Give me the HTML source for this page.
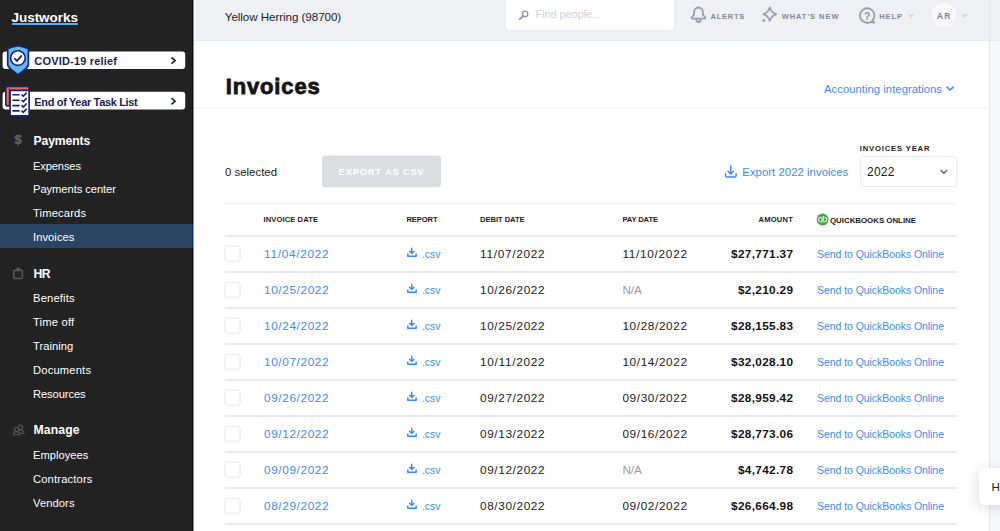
<!DOCTYPE html>
<html><head><meta charset="utf-8">
<style>
*{box-sizing:border-box;margin:0;padding:0}
html,body{width:1000px;height:531px;overflow:hidden;background:#fff;font-family:"Liberation Sans",sans-serif;color:#1c1c1e}
.a{position:absolute}
.t{position:absolute;white-space:nowrap;line-height:1}
.hl{position:absolute;height:2px;background:#e9eaee;left:225px;width:732px}

svg{position:absolute;overflow:visible}
</style></head><body>
<!-- sidebar -->
<div class="a" style="left:0;top:0;width:192px;height:531px;background:#222222"></div>
<div class="a" style="left:192px;top:0;width:1px;height:531px;background:#0d0d0d"></div>
<div class="a" style="left:193px;top:0;width:1px;height:531px;background:#8d8d8f"></div>
<div class="a" style="left:0;top:224px;width:192px;height:24px;background:#2a4464"></div>
<div class="a" style="left:192px;top:224px;width:1px;height:24px;background:#17325a"></div>
<div class="a" style="left:193px;top:224px;width:1px;height:24px;background:#8d9cb2"></div>
<!-- logo underline -->
<div class="a" style="left:11.5px;top:23px;width:66.5px;height:2px;background:#59aef5"></div>

<!-- top bar -->
<div class="a" style="left:195px;top:0;width:805px;height:41px;background:#eef0f4;border-bottom:1px solid #e8eaee"></div>
<!-- right strip -->
<div class="a" style="left:989px;top:41px;width:11px;height:490px;background:#f7f8fb"></div>
<div class="a" style="left:989px;top:0;width:1px;height:531px;background:#e5e6eb"></div>
<!-- search -->
<div class="a" style="left:506.400px;top:-2px;width:167.600px;height:32.400px;background:#fff;border-radius:0 0 4px 4px;box-shadow:0 0 1.500px #d4d6de"></div>

<svg style="left:0;top:0" width="1000" height="531" viewBox="0 0 1000 531">
<!-- banners -->
<rect x="2.600" y="51.400" width="182.600" height="17.700" rx="3" fill="#fff"/>
<rect x="2.600" y="91.800" width="182.600" height="17.600" rx="3" fill="#fff"/>
<path d="M171.500 57.500 L175.100 60.600 L171.500 63.700" fill="none" stroke="#1c2552" stroke-width="1.650"/>
<path d="M171.500 98.100 L175.100 101.200 L171.500 104.300" fill="none" stroke="#1c2552" stroke-width="1.650"/>
<!-- shield -->
<path d="M7.700 49.300 Q7.700 48.500 8.600 48.200 Q14 46.300 18 45.600 Q22 46.300 27.500 48.200 Q28.400 48.500 28.400 49.300 L28.400 64.500 C28.400 67.500 24 70.500 18 74.700 C12 70.500 7.700 67.500 7.700 64.500 Z" fill="#62b8f0" stroke="#1b2070" stroke-width="1.700" stroke-linejoin="round"/>
<circle cx="17.900" cy="58.100" r="7.300" fill="#fff" stroke="#1b2070" stroke-width="1.600"/>
<path d="M14.300 58.300 L17 60.900 L21.800 55.300" fill="none" stroke="#1b2070" stroke-width="1.800"/>
<!-- clipboard banner icon -->
<rect x="5.800" y="86.400" width="23.300" height="19.500" rx="1.800" fill="#e5703a" stroke="#1b2070" stroke-width="1.600"/>
<rect x="10.100" y="90.400" width="19" height="25.500" rx="0.800" fill="#fff" stroke="#1b2070" stroke-width="1.600"/>
<path d="M9.400 88.500 L9.400 105" fill="none" stroke="#1b2070" stroke-width="1.200"/>
<g fill="none" stroke="#1b2070" stroke-width="1.600">
<path d="M12.400 94.700h7.200M12.400 100.200h7.200M12.400 105.600h7.200M12.400 110.900h7.200"/>
<path d="M21.500 94.500l1.800 1.700 3.300-3.600M21.500 100l1.800 1.700 3.300-3.600M21.500 105.400l1.800 1.700 3.300-3.600M21.500 110.700l1.800 1.700 3.300-3.600"/>
</g>
<!-- HR icon -->
<g fill="none" stroke="#5b5c61" stroke-width="1.500">
<rect x="13.800" y="270.200" width="8.600" height="8.200" rx="1.300"/>
<circle cx="18.100" cy="269.600" r="1.300" fill="#222"/>
</g>
<!-- Manage icon -->
<g fill="#222" stroke="#56575c" stroke-width="1.100">
<circle cx="20.600" cy="427.200" r="2.100"/>
<path d="M16.800 433.200 C16.800 430.800 18.200 430 20.600 430 C23 430 24 430.800 24 433.200 Z"/>
<circle cx="16.600" cy="429.400" r="2.100"/>
<path d="M13.200 434.800 C13.200 432.600 14.300 432 16.600 432 C18.900 432 20 432.600 20 434.800 Z"/>
</g>
<!-- magnifier -->
<g fill="none" stroke="#9295a0">
<circle cx="525.100" cy="13.900" r="2.700" stroke-width="1.300"/>
<path d="M523 16.100 L519.700 19.400" stroke-width="1.700" stroke-linecap="round"/>
</g>
<!-- bell -->
<g fill="none" stroke="#9b9da7" stroke-width="1.800" stroke-linejoin="round">
<path d="M694.100 14.500 V11.900 a4.400 4.400 0 0 1 8.800 0 V14.500 c0 1.300 2.600 2 2.600 3.300 c0 .5 -.4 .8 -1 .8 H692.500 c-.6 0 -1 -.3 -1 -.8 c0 -1.300 2.600 -2 2.600 -3.300 Z"/>
<path d="M696.300 19 a2.200 3 0 0 0 4.400 0"/>
</g>
<!-- sparkle -->
<path d="M769.800 7.600 Q771.300 12.800 776.300 14.240 Q771.300 15.700 769.800 20.900 Q768.300 15.700 763.300 14.240 Q768.300 12.800 769.800 7.600 Z" fill="none" stroke="#9b9da7" stroke-width="1.700" stroke-linejoin="round"/>
<path d="M763.800 18.300 Q764.200 20.100 766 20.500 Q764.200 20.900 763.800 22.700 Q763.400 20.900 761.600 20.500 Q763.400 20.100 763.800 18.300 Z" fill="#9b9da7"/>
<!-- help -->
<g fill="none" stroke="#9b9da7" stroke-width="1.750" stroke-linejoin="round">
<path d="M872.200 20.700 A7.200 7.200 0 1 0 869.600 22.300 C871 22 872.500 22.300 874.300 22.600 C873.500 21.800 872.800 21.500 872.200 20.700 Z"/>
</g>
<!-- carets -->
<path d="M908 14.500 h6.400 l-3.200 3.400 Z" fill="#d5d6dc"/>
<path d="M961.600 14.500 h6.400 l-3.200 3.400 Z" fill="#d5d6dc"/>
<!-- avatar -->
<circle cx="944" cy="14.900" r="13.600" fill="#f8f8fb" stroke="#e8e9ee" stroke-width="1"/>
<!-- header rule -->
<rect x="194" y="107.500" width="795" height="1" fill="#eff0f2"/>
<!-- accounting chevron -->
<path d="M946.700 86.700 L950.100 90 L953.500 86.700" fill="none" stroke="#3384ee" stroke-width="1.500"/>
<!-- export button -->
<rect x="321.800" y="155.500" width="119.200" height="31.800" rx="3.500" fill="#dcdde1"/>
<!-- export icon -->
<g fill="none" stroke="#3b8af0" stroke-width="1.500" stroke-linecap="round" stroke-linejoin="round">
<path d="M730.700 166 V173.800 M727.900 171.300 L730.700 174 L733.500 171.300"/>
<path d="M725.600 173.800 V175.800 Q725.600 177.050 726.900 177.050 H734.800 Q736.100 177.050 736.100 175.800 V173.800"/>
</g>
<!-- select -->
<rect x="860.300" y="156.600" width="96.500" height="30" rx="3" fill="#fff" stroke="#e6e7ec" stroke-width="1"/>
<path d="M940.500 169.900 L943.850 173.300 L947.200 169.900" fill="none" stroke="#5f6066" stroke-width="1.300"/>
<!-- QB icon -->
<circle cx="822.600" cy="219.500" r="5.900" fill="#49a246"/>
<g fill="none" stroke="#dff1dc" stroke-width="1.100">
<path d="M821.900 217.300 H820.700 a2.200 2.200 0 0 0 0 4.400 H821"/>
<path d="M823.300 221.700 H824.500 a2.200 2.200 0 0 0 0 -4.400 H824.200"/>
<path d="M821.900 217.800 V223 M823.300 216 V221.200"/>
</g>
<g fill="none" stroke="#3b8af0" stroke-width="1.400" stroke-linejoin="round"><path d="M411.750 248.20 V253.40 M409.600 251.20 L411.750 253.50 L413.900 251.20" stroke-linecap="round"/><path d="M407.800 253.60 V256.20 H416.200 V253.60"/></g>
<g fill="none" stroke="#3b8af0" stroke-width="1.400" stroke-linejoin="round"><path d="M411.750 284.20 V289.40 M409.600 287.20 L411.750 289.50 L413.900 287.20" stroke-linecap="round"/><path d="M407.800 289.60 V292.20 H416.200 V289.60"/></g>
<g fill="none" stroke="#3b8af0" stroke-width="1.400" stroke-linejoin="round"><path d="M411.750 320.20 V325.40 M409.600 323.20 L411.750 325.50 L413.900 323.20" stroke-linecap="round"/><path d="M407.800 325.60 V328.20 H416.200 V325.60"/></g>
<g fill="none" stroke="#3b8af0" stroke-width="1.400" stroke-linejoin="round"><path d="M411.750 356.20 V361.40 M409.600 359.20 L411.750 361.50 L413.900 359.20" stroke-linecap="round"/><path d="M407.800 361.60 V364.20 H416.200 V361.60"/></g>
<g fill="none" stroke="#3b8af0" stroke-width="1.400" stroke-linejoin="round"><path d="M411.750 392.20 V397.40 M409.600 395.20 L411.750 397.50 L413.900 395.20" stroke-linecap="round"/><path d="M407.800 397.60 V400.20 H416.200 V397.60"/></g>
<g fill="none" stroke="#3b8af0" stroke-width="1.400" stroke-linejoin="round"><path d="M411.750 428.20 V433.40 M409.600 431.20 L411.750 433.50 L413.900 431.20" stroke-linecap="round"/><path d="M407.800 433.60 V436.20 H416.200 V433.60"/></g>
<g fill="none" stroke="#3b8af0" stroke-width="1.400" stroke-linejoin="round"><path d="M411.750 464.20 V469.40 M409.600 467.20 L411.750 469.50 L413.900 467.20" stroke-linecap="round"/><path d="M407.800 469.60 V472.20 H416.200 V469.60"/></g>
<g fill="none" stroke="#3b8af0" stroke-width="1.400" stroke-linejoin="round"><path d="M411.750 500.20 V505.40 M409.600 503.20 L411.750 505.50 L413.900 503.20" stroke-linecap="round"/><path d="M407.800 505.60 V508.20 H416.200 V505.60"/></g>
<rect x="224.850" y="246.30" width="15.300" height="15.100" rx="3.200" fill="#fff" stroke="#eef0f3" stroke-width="1.600"/><rect x="224.850" y="282.30" width="15.300" height="15.100" rx="3.200" fill="#fff" stroke="#eef0f3" stroke-width="1.600"/><rect x="224.850" y="318.30" width="15.300" height="15.100" rx="3.200" fill="#fff" stroke="#eef0f3" stroke-width="1.600"/><rect x="224.850" y="354.30" width="15.300" height="15.100" rx="3.200" fill="#fff" stroke="#eef0f3" stroke-width="1.600"/><rect x="224.850" y="390.30" width="15.300" height="15.100" rx="3.200" fill="#fff" stroke="#eef0f3" stroke-width="1.600"/><rect x="224.850" y="426.30" width="15.300" height="15.100" rx="3.200" fill="#fff" stroke="#eef0f3" stroke-width="1.600"/><rect x="224.850" y="462.30" width="15.300" height="15.100" rx="3.200" fill="#fff" stroke="#eef0f3" stroke-width="1.600"/><rect x="224.850" y="498.30" width="15.300" height="15.100" rx="3.200" fill="#fff" stroke="#eef0f3" stroke-width="1.600"/>
</svg>

<!-- help "?" -->
<div class="t" style="left:863.900px;top:10.600px;font-size:10.500px;font-weight:bold;color:#92949e">?</div>

<!-- table lines -->
<div class="a" style="left:225px;top:203px;width:732px;height:1px;background:#eceef2"></div>
<div class="hl" style="top:235px"></div>
<div class="hl" style="top:271px"></div>
<div class="hl" style="top:307px"></div>
<div class="hl" style="top:343px"></div>
<div class="hl" style="top:379px"></div>
<div class="hl" style="top:415px"></div>
<div class="hl" style="top:451px"></div>
<div class="hl" style="top:487px"></div>
<div class="hl" style="top:523px"></div>

<!-- floating help -->
<div class="a" style="left:978.600px;top:468.300px;width:40px;height:37px;background:#fff;border-radius:6px;box-shadow:-2px 3px 14px rgba(0,0,0,.13)"></div>

<div class="t" id="t0" style="left:11.50px;top:10.57px;font-size:13.5px;font-weight:bold;color:#fff;letter-spacing:-0.035px;">Justworks</div>
<div class="t" id="t1" style="left:34.30px;top:56.39px;font-size:11px;font-weight:bold;color:#1c2552;letter-spacing:0.186px;">COVID-19 relief</div>
<div class="t" id="t2" style="left:34.30px;top:97.19px;font-size:11px;font-weight:bold;color:#1c2552;letter-spacing:-0.342px;">End of Year Task List</div>
<div class="t" id="t3" style="left:14.60px;top:133.00px;font-size:13px;font-weight:bold;color:#606169;letter-spacing:0.000px;-webkit-text-stroke:0.35px #606169;">$</div>
<div class="t" id="t4" style="left:33.50px;top:134.77px;font-size:12.2px;font-weight:bold;color:#fff;letter-spacing:-0.113px;">Payments</div>
<div class="t" id="t5" style="left:33.50px;top:267.77px;font-size:12.2px;font-weight:bold;color:#fff;letter-spacing:-0.609px;">HR</div>
<div class="t" id="t6" style="left:33.50px;top:424.07px;font-size:12.2px;font-weight:bold;color:#fff;letter-spacing:0.122px;">Manage</div>
<div class="t" id="t7" style="left:33.00px;top:161.12px;font-size:11.2px;font-weight:normal;color:#fff;letter-spacing:-0.163px;">Expenses</div>
<div class="t" id="t8" style="left:33.00px;top:183.92px;font-size:11.2px;font-weight:normal;color:#fff;letter-spacing:-0.068px;">Payments center</div>
<div class="t" id="t9" style="left:33.00px;top:207.72px;font-size:11.2px;font-weight:normal;color:#fff;letter-spacing:0.148px;">Timecards</div>
<div class="t" id="t10" style="left:33.00px;top:231.52px;font-size:11.2px;font-weight:normal;color:#fff;letter-spacing:0.050px;">Invoices</div>
<div class="t" id="t11" style="left:33.00px;top:292.92px;font-size:11.2px;font-weight:normal;color:#fff;letter-spacing:0.166px;">Benefits</div>
<div class="t" id="t12" style="left:33.00px;top:316.72px;font-size:11.2px;font-weight:normal;color:#fff;letter-spacing:0.186px;">Time off</div>
<div class="t" id="t13" style="left:33.00px;top:340.52px;font-size:11.2px;font-weight:normal;color:#fff;letter-spacing:0.026px;">Training</div>
<div class="t" id="t14" style="left:33.00px;top:365.32px;font-size:11.2px;font-weight:normal;color:#fff;letter-spacing:0.176px;">Documents</div>
<div class="t" id="t15" style="left:33.00px;top:389.12px;font-size:11.2px;font-weight:normal;color:#fff;letter-spacing:-0.111px;">Resources</div>
<div class="t" id="t16" style="left:33.00px;top:449.52px;font-size:11.2px;font-weight:normal;color:#fff;letter-spacing:-0.005px;">Employees</div>
<div class="t" id="t17" style="left:33.00px;top:474.32px;font-size:11.2px;font-weight:normal;color:#fff;letter-spacing:0.157px;">Contractors</div>
<div class="t" id="t18" style="left:33.00px;top:498.12px;font-size:11.2px;font-weight:normal;color:#fff;letter-spacing:0.073px;">Vendors</div>
<div class="t" id="t19" style="left:224.80px;top:11.18px;font-size:11.6px;font-weight:normal;color:#1c1c1e;letter-spacing:-0.053px;">Yellow Herring (98700)</div>
<div class="t" id="t20" style="left:535.60px;top:9.09px;font-size:11px;font-weight:normal;color:#cfd1d8;letter-spacing:-0.097px;">Find people...</div>
<div class="t" id="t21" style="left:710.60px;top:13.45px;font-size:7.5px;font-weight:bold;color:#85878f;letter-spacing:0.740px;">ALERTS</div>
<div class="t" id="t22" style="left:781.70px;top:13.45px;font-size:7.5px;font-weight:bold;color:#85878f;letter-spacing:0.943px;">WHAT'S NEW</div>
<div class="t" id="t23" style="left:879.20px;top:13.45px;font-size:7.5px;font-weight:bold;color:#85878f;letter-spacing:0.928px;">HELP</div>
<div class="t" id="t24" style="left:936.80px;top:12.00px;font-size:8.5px;font-weight:bold;color:#85878f;letter-spacing:1.319px;">AR</div>
<div class="t" id="t25" style="left:225.80px;top:76.08px;font-size:22px;font-weight:bold;color:#141416;letter-spacing:0.836px;-webkit-text-stroke:0.8px #141416;">Invoices</div>
<div class="t" id="t26" style="left:824.00px;top:84.13px;font-size:11.3px;font-weight:normal;color:#3f8cf0;letter-spacing:0.026px;">Accounting integrations</div>
<div class="t" id="t27" style="left:225.00px;top:166.85px;font-size:11.4px;font-weight:normal;color:#1c1c1e;letter-spacing:0.007px;">0 selected</div>
<div class="t" id="t28" style="left:338.60px;top:168.43px;font-size:9.3px;font-weight:bold;color:#ffffff;letter-spacing:0.842px;">EXPORT AS CSV</div>
<div class="t" id="t29" style="left:742.30px;top:167.35px;font-size:11.4px;font-weight:normal;color:#3f8cf0;letter-spacing:0.013px;">Export 2022 invoices</div>
<div class="t" id="t30" style="left:859.80px;top:144.58px;font-size:7.7px;font-weight:bold;color:#1c1c1e;letter-spacing:0.801px;">INVOICES YEAR</div>
<div class="t" id="t31" style="left:867.10px;top:165.84px;font-size:12px;font-weight:normal;color:#1c1c1e;letter-spacing:0.199px;">2022</div>
<div class="t" id="t32" style="left:263.60px;top:215.87px;font-size:7.6px;font-weight:bold;color:#1c1c1e;letter-spacing:0.086px;">INVOICE DATE</div>
<div class="t" id="t33" style="left:406.40px;top:215.87px;font-size:7.6px;font-weight:bold;color:#1c1c1e;letter-spacing:-0.091px;">REPORT</div>
<div class="t" id="t34" style="left:480.00px;top:215.87px;font-size:7.6px;font-weight:bold;color:#1c1c1e;letter-spacing:-0.044px;">DEBIT DATE</div>
<div class="t" id="t35" style="left:622.40px;top:215.87px;font-size:7.6px;font-weight:bold;color:#1c1c1e;letter-spacing:-0.120px;">PAY DATE</div>
<div class="t" id="t36" style="right:206.75px;top:215.87px;font-size:7.6px;font-weight:bold;color:#1c1c1e;letter-spacing:0.254px;">AMOUNT</div>
<div class="t" id="t37" style="left:830.00px;top:216.61px;font-size:7.9px;font-weight:bold;color:#1c1c1e;letter-spacing:-0.023px;">QUICKBOOKS ONLINE</div>
<div class="t" id="t38" style="left:264.00px;top:249.41px;font-size:11.8px;font-weight:normal;color:#3f8cf0;letter-spacing:0.714px;">11/04/2022</div>
<div class="t" id="t39" style="left:422.00px;top:248.51px;font-size:10.5px;font-weight:normal;color:#3f8cf0;letter-spacing:-0.091px;">.csv</div>
<div class="t" id="t40" style="left:480.00px;top:249.41px;font-size:11.8px;font-weight:normal;color:#1c1c1e;letter-spacing:0.714px;">11/07/2022</div>
<div class="t" id="t41" style="left:622.40px;top:249.41px;font-size:11.8px;font-weight:normal;color:#1c1c1e;letter-spacing:0.714px;">11/10/2022</div>
<div class="t" id="t42" style="right:206.67px;top:249.41px;font-size:11.8px;font-weight:bold;color:#141416;letter-spacing:0.328px;">$27,771.37</div>
<div class="t" id="t43" style="left:817.00px;top:249.21px;font-size:10.5px;font-weight:normal;color:#3f8cf0;letter-spacing:-0.059px;">Send to QuickBooks Online</div>
<div class="t" id="t44" style="left:264.00px;top:285.41px;font-size:11.8px;font-weight:normal;color:#3f8cf0;letter-spacing:0.617px;">10/25/2022</div>
<div class="t" id="t45" style="left:422.00px;top:284.51px;font-size:10.5px;font-weight:normal;color:#3f8cf0;letter-spacing:-0.091px;">.csv</div>
<div class="t" id="t46" style="left:480.00px;top:285.41px;font-size:11.8px;font-weight:normal;color:#1c1c1e;letter-spacing:0.617px;">10/26/2022</div>
<div class="t" id="t47" style="left:622.40px;top:285.41px;font-size:11.8px;font-weight:normal;color:#9b9da5;letter-spacing:-0.086px;">N/A</div>
<div class="t" id="t48" style="right:206.69px;top:285.41px;font-size:11.8px;font-weight:bold;color:#141416;letter-spacing:0.314px;">$2,210.29</div>
<div class="t" id="t49" style="left:817.00px;top:285.21px;font-size:10.5px;font-weight:normal;color:#3f8cf0;letter-spacing:-0.059px;">Send to QuickBooks Online</div>
<div class="t" id="t50" style="left:264.00px;top:321.41px;font-size:11.8px;font-weight:normal;color:#3f8cf0;letter-spacing:0.617px;">10/24/2022</div>
<div class="t" id="t51" style="left:422.00px;top:320.51px;font-size:10.5px;font-weight:normal;color:#3f8cf0;letter-spacing:-0.091px;">.csv</div>
<div class="t" id="t52" style="left:480.00px;top:321.41px;font-size:11.8px;font-weight:normal;color:#1c1c1e;letter-spacing:0.617px;">10/25/2022</div>
<div class="t" id="t53" style="left:622.40px;top:321.41px;font-size:11.8px;font-weight:normal;color:#1c1c1e;letter-spacing:0.617px;">10/28/2022</div>
<div class="t" id="t54" style="right:206.67px;top:321.41px;font-size:11.8px;font-weight:bold;color:#141416;letter-spacing:0.328px;">$28,155.83</div>
<div class="t" id="t55" style="left:817.00px;top:321.21px;font-size:10.5px;font-weight:normal;color:#3f8cf0;letter-spacing:-0.059px;">Send to QuickBooks Online</div>
<div class="t" id="t56" style="left:264.00px;top:357.41px;font-size:11.8px;font-weight:normal;color:#3f8cf0;letter-spacing:0.617px;">10/07/2022</div>
<div class="t" id="t57" style="left:422.00px;top:356.51px;font-size:10.5px;font-weight:normal;color:#3f8cf0;letter-spacing:-0.091px;">.csv</div>
<div class="t" id="t58" style="left:480.00px;top:357.41px;font-size:11.8px;font-weight:normal;color:#1c1c1e;letter-spacing:0.714px;">10/11/2022</div>
<div class="t" id="t59" style="left:622.40px;top:357.41px;font-size:11.8px;font-weight:normal;color:#1c1c1e;letter-spacing:0.617px;">10/14/2022</div>
<div class="t" id="t60" style="right:206.67px;top:357.41px;font-size:11.8px;font-weight:bold;color:#141416;letter-spacing:0.328px;">$32,028.10</div>
<div class="t" id="t61" style="left:817.00px;top:357.21px;font-size:10.5px;font-weight:normal;color:#3f8cf0;letter-spacing:-0.059px;">Send to QuickBooks Online</div>
<div class="t" id="t62" style="left:264.00px;top:393.41px;font-size:11.8px;font-weight:normal;color:#3f8cf0;letter-spacing:0.617px;">09/26/2022</div>
<div class="t" id="t63" style="left:422.00px;top:392.51px;font-size:10.5px;font-weight:normal;color:#3f8cf0;letter-spacing:-0.091px;">.csv</div>
<div class="t" id="t64" style="left:480.00px;top:393.41px;font-size:11.8px;font-weight:normal;color:#1c1c1e;letter-spacing:0.617px;">09/27/2022</div>
<div class="t" id="t65" style="left:622.40px;top:393.41px;font-size:11.8px;font-weight:normal;color:#1c1c1e;letter-spacing:0.617px;">09/30/2022</div>
<div class="t" id="t66" style="right:206.67px;top:393.41px;font-size:11.8px;font-weight:bold;color:#141416;letter-spacing:0.328px;">$28,959.42</div>
<div class="t" id="t67" style="left:817.00px;top:393.21px;font-size:10.5px;font-weight:normal;color:#3f8cf0;letter-spacing:-0.059px;">Send to QuickBooks Online</div>
<div class="t" id="t68" style="left:264.00px;top:429.41px;font-size:11.8px;font-weight:normal;color:#3f8cf0;letter-spacing:0.617px;">09/12/2022</div>
<div class="t" id="t69" style="left:422.00px;top:428.51px;font-size:10.5px;font-weight:normal;color:#3f8cf0;letter-spacing:-0.091px;">.csv</div>
<div class="t" id="t70" style="left:480.00px;top:429.41px;font-size:11.8px;font-weight:normal;color:#1c1c1e;letter-spacing:0.617px;">09/13/2022</div>
<div class="t" id="t71" style="left:622.40px;top:429.41px;font-size:11.8px;font-weight:normal;color:#1c1c1e;letter-spacing:0.617px;">09/16/2022</div>
<div class="t" id="t72" style="right:206.67px;top:429.41px;font-size:11.8px;font-weight:bold;color:#141416;letter-spacing:0.328px;">$28,773.06</div>
<div class="t" id="t73" style="left:817.00px;top:429.21px;font-size:10.5px;font-weight:normal;color:#3f8cf0;letter-spacing:-0.059px;">Send to QuickBooks Online</div>
<div class="t" id="t74" style="left:264.00px;top:465.41px;font-size:11.8px;font-weight:normal;color:#3f8cf0;letter-spacing:0.617px;">09/09/2022</div>
<div class="t" id="t75" style="left:422.00px;top:464.51px;font-size:10.5px;font-weight:normal;color:#3f8cf0;letter-spacing:-0.091px;">.csv</div>
<div class="t" id="t76" style="left:480.00px;top:465.41px;font-size:11.8px;font-weight:normal;color:#1c1c1e;letter-spacing:0.617px;">09/12/2022</div>
<div class="t" id="t77" style="left:622.40px;top:465.41px;font-size:11.8px;font-weight:normal;color:#9b9da5;letter-spacing:-0.086px;">N/A</div>
<div class="t" id="t78" style="right:206.69px;top:465.41px;font-size:11.8px;font-weight:bold;color:#141416;letter-spacing:0.314px;">$4,742.78</div>
<div class="t" id="t79" style="left:817.00px;top:465.21px;font-size:10.5px;font-weight:normal;color:#3f8cf0;letter-spacing:-0.059px;">Send to QuickBooks Online</div>
<div class="t" id="t80" style="left:264.00px;top:501.41px;font-size:11.8px;font-weight:normal;color:#3f8cf0;letter-spacing:0.617px;">08/29/2022</div>
<div class="t" id="t81" style="left:422.00px;top:500.51px;font-size:10.5px;font-weight:normal;color:#3f8cf0;letter-spacing:-0.091px;">.csv</div>
<div class="t" id="t82" style="left:480.00px;top:501.41px;font-size:11.8px;font-weight:normal;color:#1c1c1e;letter-spacing:0.617px;">08/30/2022</div>
<div class="t" id="t83" style="left:622.40px;top:501.41px;font-size:11.8px;font-weight:normal;color:#1c1c1e;letter-spacing:0.617px;">09/02/2022</div>
<div class="t" id="t84" style="right:206.67px;top:501.41px;font-size:11.8px;font-weight:bold;color:#141416;letter-spacing:0.328px;">$26,664.98</div>
<div class="t" id="t85" style="left:817.00px;top:501.21px;font-size:10.5px;font-weight:normal;color:#3f8cf0;letter-spacing:-0.059px;">Send to QuickBooks Online</div>
<div class="t" id="t86" style="left:991.60px;top:482.27px;font-size:11.5px;font-weight:normal;color:#222;letter-spacing:0.000px;">H</div>
</body></html>
